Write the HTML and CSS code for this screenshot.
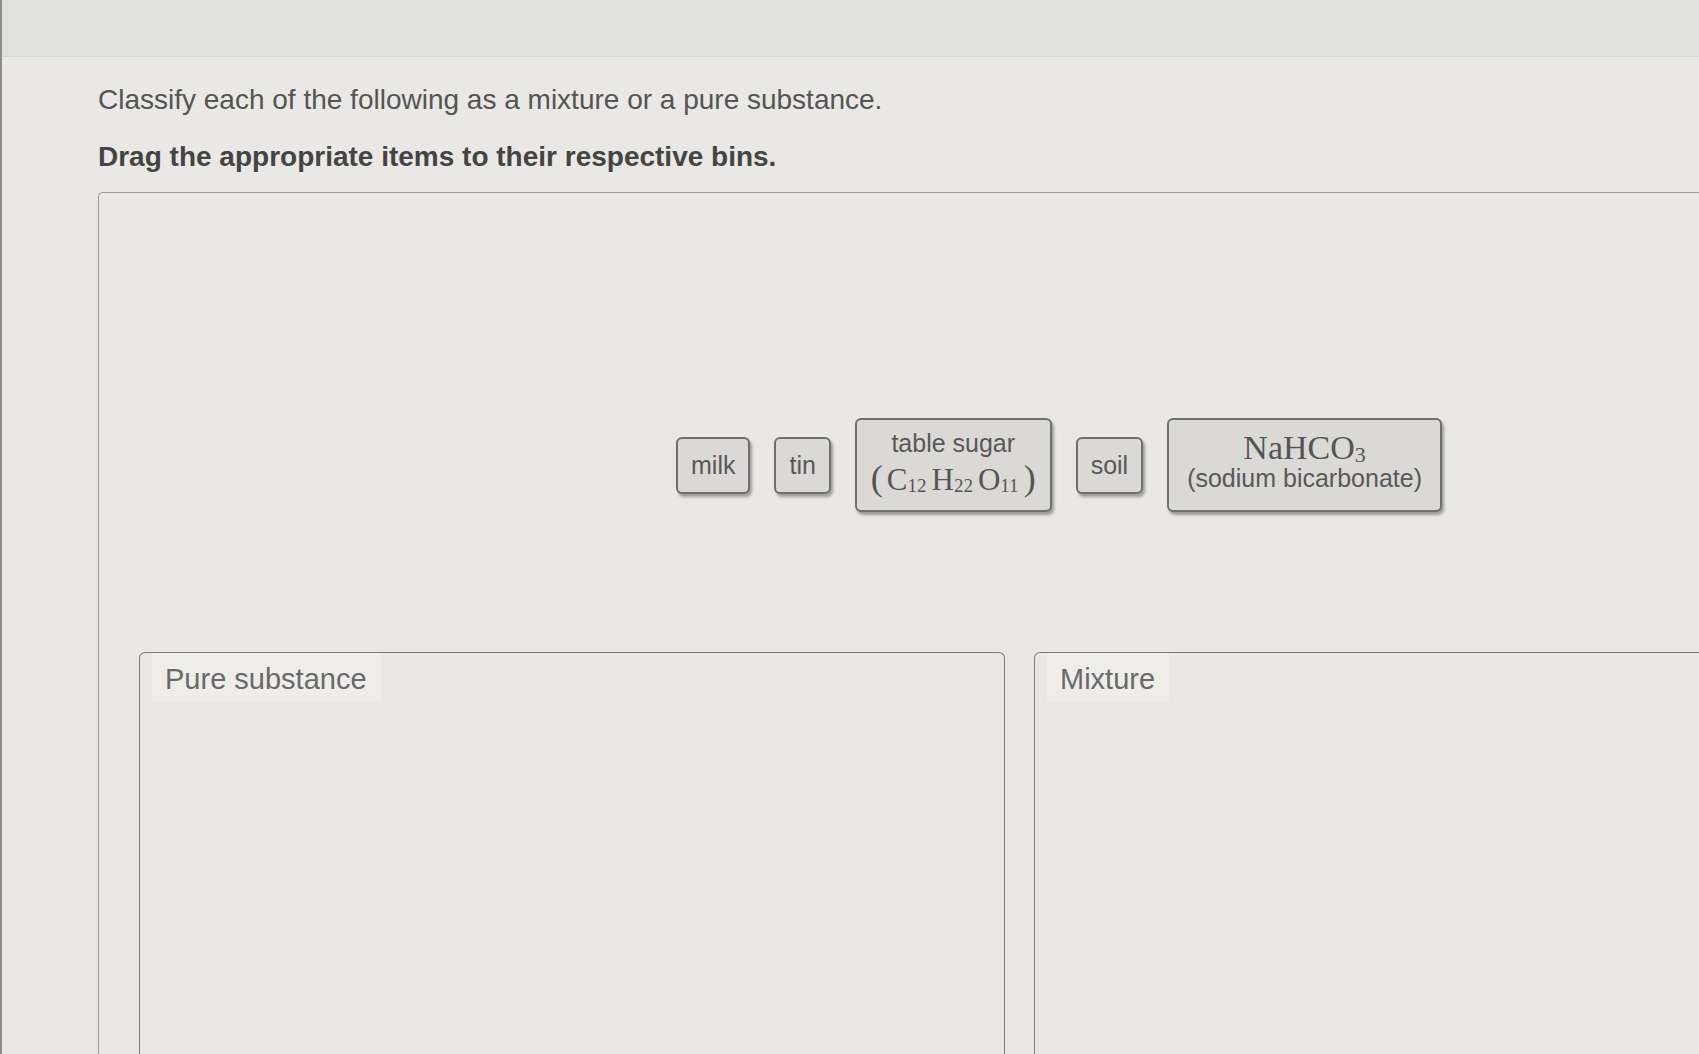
FILE: index.html
```html
<!DOCTYPE html>
<html lang="en">
<head>
<meta charset="utf-8">
<title>Classify mixtures and pure substances</title>
<link rel="stylesheet" href="styles.css">
</head>
<body>
<div class="screen">
  <div class="topbar"></div>
  <div class="content">
    <p class="prompt">Classify each of the following as a mixture or a pure substance.</p>
    <p class="instruction">Drag the appropriate items to their respective bins.</p>
    <div class="workspace">
      <div class="pool">
        <div class="item">milk</div>
        <div class="item">tin</div>
        <div class="item item-tall item-sugar">
          <span class="line-text">table sugar</span>
          <span class="formula"><span class="paren">(</span><span class="el">C<sub>12</sub></span><span class="el el-gap">H<sub>22</sub></span><span class="el el-gap">O<sub>11</sub></span><span class="paren paren-close">)</span></span>
        </div>
        <div class="item">soil</div>
        <div class="item item-tall item-wide">
          <span class="formula-top">NaHCO<sub>3</sub></span>
          <span class="line-text line-text-low">(sodium bicarbonate)</span>
        </div>
      </div>
      <div class="bins">
        <div class="bin"><div class="bin-label">Pure substance</div></div>
        <div class="bin"><div class="bin-label">Mixture</div></div>
      </div>
    </div>
  </div>
</div>
</body>
</html>
```
FILE: styles.css
```css
html, body {
  margin: 0;
  padding: 0;
  height: 100%;
  overflow: hidden;
}

body {
  background: #e9e8e4;
  font-family: "Liberation Sans", Arial, sans-serif;
}

.screen {
  min-height: 100%;
  border-left: 2px solid #8c8c8a;
  box-sizing: border-box;
}

.topbar {
  height: 56px;
  background: #e1e1de;
  border-bottom: 1px solid #d6d6d2;
}

.content {
  padding-left: 96px;
}

.prompt {
  margin: 27px 0 0;
  font-size: 28px;
  line-height: 32px;
  color: #545454;
}

.instruction {
  margin: 25px 0 0;
  font-size: 28px;
  line-height: 32px;
  font-weight: bold;
  color: #444;
}

.workspace {
  margin-top: 19px;
  width: 1920px;
  height: 900px;
  border: 1.5px solid #9d9d9a;
  border-bottom: none;
  border-right: none;
  border-radius: 5px 0 0 0;
}

.pool {
  display: flex;
  justify-content: center;
  align-items: center;
  gap: 24px;
  padding-top: 225px;
  height: 94px;
}

.item {
  flex: none;
  box-sizing: border-box;
  height: 57px;
  padding: 0 13px;
  display: flex;
  flex-direction: column;
  justify-content: center;
  align-items: center;
  background: #dad9d6;
  border: 2px solid #6f6f6d;
  border-radius: 6px;
  box-shadow: 2px 3px 3px rgba(0, 0, 0, 0.33);
  font-size: 25px;
  line-height: 30px;
  color: #585858;
  white-space: nowrap;
}

.item-tall {
  height: 94px;
  justify-content: flex-start;
  padding: 6px 14px 0;
}

.item-wide {
  padding: 11px 18px 0;
}

.line-text {
  display: block;
  line-height: 34px;
}

.line-text-low {
  line-height: 28px;
}

.formula {
  display: block;
  font-family: "Liberation Serif", "Times New Roman", serif;
  font-size: 31px;
  line-height: 40px;
  color: #555;
}

.formula-top {
  display: block;
  font-family: "Liberation Serif", "Times New Roman", serif;
  font-size: 34px;
  line-height: 33px;
  color: #555;
}

.formula-top sub {
  font-size: 22px;
  line-height: 0;
  vertical-align: -3px;
}

.paren {
  font-size: 36px;
  line-height: 0;
}

.paren-close {
  margin-left: 5px;
}

.el {
  margin-left: 4px;
}

.el-gap {
  margin-left: 5px;
}

.el sub {
  font-size: 19px;
  line-height: 0;
  vertical-align: -2px;
}

.bins {
  display: flex;
  gap: 29px;
  margin: 140px 0 0 40px;
}

.bin {
  flex: none;
  width: 866px;
  height: 460px;
  box-sizing: border-box;
  border: 1.5px solid #7e7e7c;
  border-bottom: none;
  border-radius: 6px 6px 0 0;
}

.bin-label {
  display: inline-block;
  margin-left: 12px;
  padding: 9px 14px 5px 13px;
  background: #eeedea;
  font-size: 29px;
  line-height: 34px;
  color: #696969;
}
```
